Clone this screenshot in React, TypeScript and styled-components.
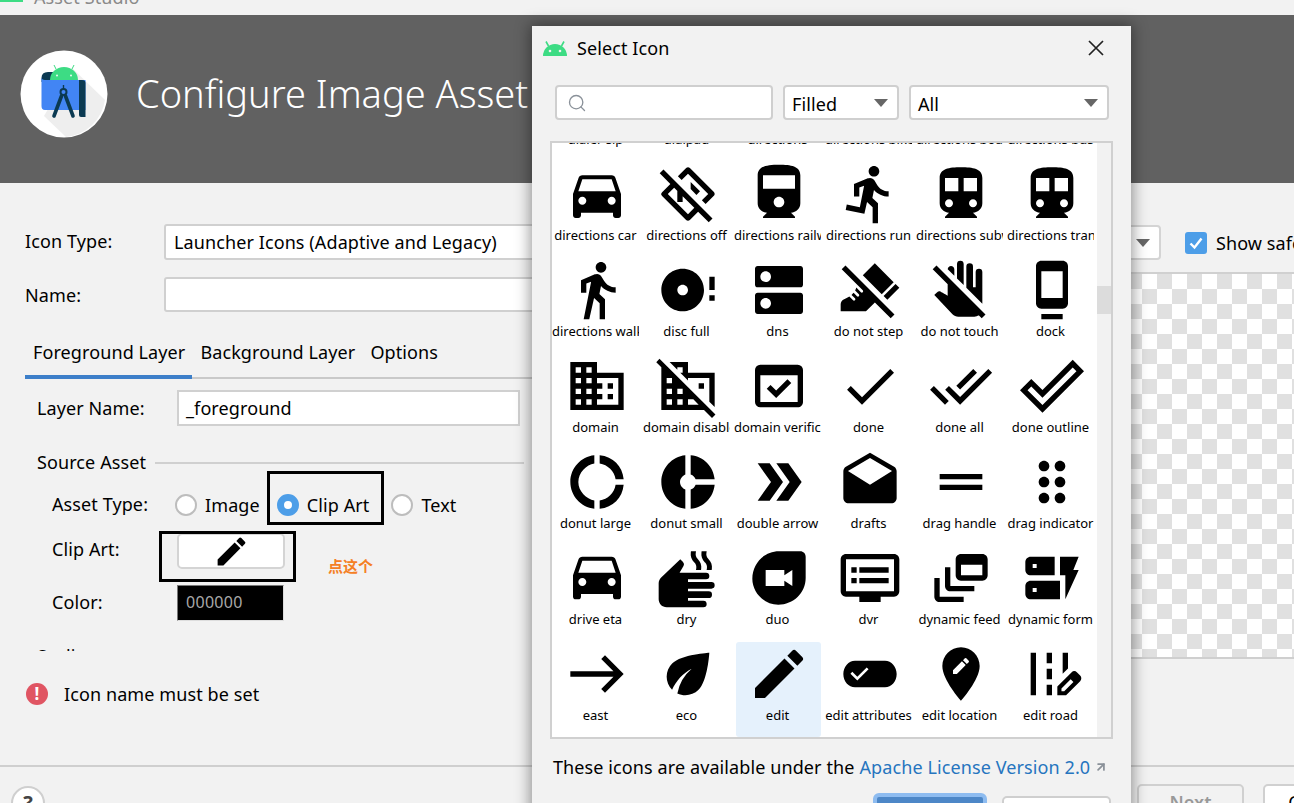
import React from 'react';
import styled, { createGlobalStyle } from 'styled-components';
import {
  MdDirectionsCar, MdOutlineDirectionsOff, MdDirectionsRailway, MdDirectionsRun, MdDirectionsSubway, MdDirectionsTransit,
  MdDirectionsWalk, MdDiscFull, MdDns, MdDoNotStep, MdDoNotTouch, MdDock,
  MdDomain, MdDomainDisabled, MdDomainVerification, MdDone, MdDoneAll, MdDoneOutline,
  MdDonutLarge, MdDonutSmall, MdDoubleArrow, MdDrafts, MdDragHandle, MdDragIndicator,
  MdDriveEta, MdDry, MdDuo, MdDvr, MdDynamicFeed, MdDynamicForm,
  MdEast, MdEco, MdEdit, MdEditAttributes, MdEditLocation, MdEditRoad,
  MdDialerSip, MdDialpad, MdDirections, MdDirectionsBike, MdDirectionsBoat, MdDirectionsBus,
} from 'react-icons/md';
import { Search, ArrowUpRight } from 'lucide-react';

const FONT = `"Noto Sans", "Noto Sans CJK SC", sans-serif`;

const Global = createGlobalStyle`
  html, body { margin: 0; padding: 0; background: #f2f2f2; }
  * { box-sizing: border-box; }
  body { font-family: ${FONT}; color: #000; }
`;

const Page = styled.div`
  position: relative;
  width: 1294px;
  height: 803px;
  overflow: hidden;
  display: flex;
  flex-direction: column;
  background: #f2f2f2;
  font-size: 18px;
  letter-spacing: 0.1px;
`;

const TopStrip = styled.div`
  height: 15px;
  flex: none;
  overflow: hidden;
  display: flex;
  align-items: flex-start;
`;
const AppMark = styled.div`
  width: 23px;
  height: 2px;
  background: #3ddc84;
`;
const AppName = styled.div`
  margin: -14px 0 0 11px;
  font-size: 18px;
  line-height: 22px;
  color: #8a8a8a;
`;

const Banner = styled.header`
  height: 168px;
  flex: none;
  background: #616161;
  display: flex;
  align-items: flex-start;
  padding: 35px 0 0 20px;
`;
const BannerLogo = styled.svg`
  width: 88px;
  height: 88px;
  flex: none;
`;
const BannerTitle = styled.h1`
  margin: 18px 0 0 28px;
  font-size: 38px;
  line-height: 50px;
  font-weight: 300;
  color: #fff;
  white-space: nowrap;
  letter-spacing: 0;
`;

const Body = styled.main`
  height: 582px;
  flex: none;
  display: flex;
`;
const LeftColumn = styled.section`
  width: 540px;
  flex: none;
  overflow: hidden;
  padding: 41px 0 0 25px;
`;
const FieldRow = styled.div<{ $top?: number; $height?: number }>`
  display: flex;
  align-items: center;
  height: ${p => p.$height ?? 36}px;
  margin-top: ${p => p.$top ?? 0}px;
`;
const FieldLabel = styled.label<{ $width: number; $lift?: number }>`
  width: ${p => p.$width}px;
  flex: none;
  white-space: nowrap;
  padding-bottom: ${p => p.$lift ?? 0}px;
`;
const TextBox = styled.div`
  flex: 1;
  align-self: stretch;
  background: #fff;
  border: 2px solid #d0d0d0;
  border-radius: 3px;
  padding-left: 8px;
  line-height: 33px;
  white-space: nowrap;
  overflow: hidden;
`;
const TabBar = styled.nav`
  display: flex;
  height: 44px;
  margin-top: 23px;
  border-bottom: 2px solid #c9c9c9;
`;
const Tab = styled.div<{ $active?: boolean }>`
  height: 44px;
  padding: 0 7px 0 8px;
  line-height: 34px;
  white-space: nowrap;
  border-bottom: 4px solid ${p => (p.$active ? '#3d7fc9' : 'transparent')};
`;
const FormScroller = styled.div`
  height: 272px;
  overflow: hidden;
  padding-left: 12px;
`;
const LayerBox = styled(TextBox)`
  flex: none;
  width: 343px;
  border-radius: 0;
  padding-left: 7px;
`;
const SectionHead = styled.div`
  display: flex;
  align-items: center;
  gap: 9px;
  width: 487px;
  height: 24px;
  margin-top: 24px;
  line-height: 22px;
  &::after {
    content: '';
    flex: 1;
    height: 2px;
    background: #d0d0d0;
    margin-top: 2px;
  }
`;
const SubRow = styled(FieldRow)`
  padding-left: 15px;
`;
const RadioGroup = styled.div`
  display: flex;
  align-items: center;
  margin-left: -2px;
`;
const RadioDot = styled.span<{ $on?: boolean }>`
  width: 22px;
  height: 22px;
  flex: none;
  border-radius: 50%;
  border: ${p => (p.$on ? '7px solid #4d9ee8' : '2px solid #bdbdbd')};
  background: #fff;
`;
const RadioText = styled.span<{ $gap: number }>`
  margin: 0 ${p => p.$gap}px 0 8px;
  padding-bottom: 1px;
  white-space: nowrap;
`;
const IconButton = styled.div`
  width: 108px;
  height: 36px;
  background: #fff;
  border: 2px solid #d4d4d4;
  border-radius: 5px;
  display: flex;
  align-items: center;
  justify-content: center;
`;
const ColorSwatch = styled.div`
  width: 107px;
  height: 36px;
  background: #000;
  color: #a8a8a8;
  border: 1px solid #777;
  border-right-color: #ddd;
  border-bottom-color: #ddd;
  font-size: 16px;
  line-height: 33px;
  padding-left: 8px;
  letter-spacing: 0.3px;
`;
const ClippedHead = styled.div`
  margin-top: 23px;
  line-height: 24px;
`;
const ErrorRow = styled.div`
  display: flex;
  align-items: center;
  gap: 16px;
  height: 22px;
  margin: 32px 0 0 1px;
  white-space: nowrap;
`;
const ErrorDot = styled.span`
  width: 22px;
  height: 22px;
  border-radius: 50%;
  background: #e05563;
  color: #fff;
  font-weight: 700;
  font-size: 17px;
  line-height: 22px;
  text-align: center;
`;

const RightColumn = styled.section`
  flex: 1;
  min-width: 0;
  overflow: hidden;
  padding-top: 42px;
`;
const PreviewBar = styled.div`
  display: flex;
  align-items: center;
  height: 35px;
  white-space: nowrap;
`;
const PreviewSelect = styled.div`
  width: 621px;
  height: 35px;
  flex: none;
  background: #fff;
  border: 2px solid #d4d4d4;
  border-radius: 4px;
  display: flex;
  align-items: center;
  justify-content: flex-end;
  padding-right: 9px;
`;
const Check = styled.span`
  width: 22px;
  height: 22px;
  flex: none;
  margin: 0 9px 0 24px;
  border-radius: 3px;
  background: #4d9ee8;
  display: flex;
  align-items: center;
  justify-content: center;
`;
const Checker = styled.div`
  height: 387px;
  margin-top: 12px;
  border-top: 2px solid #d0d0d0;
  border-bottom: 2px solid #cfcfcf;
  background: repeating-conic-gradient(#e0e0e0 0 25%, #fff 0 50%) 2px 0 / 30px 30px;
`;

const Footer = styled.footer`
  height: 38px;
  flex: none;
  overflow: hidden;
  display: flex;
  align-items: flex-start;
  justify-content: space-between;
  border-top: 2px solid #cfcfcf;
`;
const HelpCircle = styled.div`
  width: 34px;
  height: 34px;
  margin: 19px 0 0 11px;
  border: 2px solid #cfcfcf;
  border-radius: 50%;
  background: #fff;
  text-align: center;
  font-size: 20px;
  font-weight: 700;
  line-height: 30px;
  color: #444;
`;
const WizardButtons = styled.div`
  display: flex;
  gap: 19px;
  margin-right: -76px;
  margin-top: 17px;
`;
const WizardButton = styled.div<{ $disabled?: boolean }>`
  width: 107px;
  height: 38px;
  border: 2px solid #d0d0d0;
  border-radius: 5px;
  background: ${p => (p.$disabled ? '#f2f2f2' : '#fff')};
  color: ${p => (p.$disabled ? '#999' : '#000')};
  text-align: center;
  line-height: 32px;
  font-weight: ${p => (p.$disabled ? 600 : 400)};
`;

const Callout = styled.div<{ $x: number; $y: number; $w: number; $h: number }>`
  position: absolute;
  left: ${p => p.$x}px;
  top: ${p => p.$y}px;
  width: ${p => p.$w}px;
  height: ${p => p.$h}px;
  border: 3px solid #000;
`;
const Hint = styled.div`
  position: absolute;
  left: 328px;
  top: 555px;
  font-size: 15px;
  line-height: 22px;
  font-weight: 700;
  color: #f58025;
  letter-spacing: 0;
`;

const Dialog = styled.aside`
  position: absolute;
  left: 532px;
  top: 26px;
  width: 599px;
  height: 800px;
  background: #f2f2f2;
  box-shadow: 0 0 14px 2px rgba(0, 0, 0, 0.4);
  display: flex;
  flex-direction: column;
`;
const DialogHead = styled.div`
  display: flex;
  align-items: center;
  height: 44px;
  flex: none;
  padding: 0 27px 0 11px;
`;
const DialogMark = styled.svg`
  width: 24px;
  height: 18px;
  flex: none;
`;
const DialogTitle = styled.div`
  flex: 1;
  margin-left: 10px;
`;
const FilterRow = styled.div`
  display: flex;
  gap: 10px;
  height: 35px;
  flex: none;
  margin: 15px 0 0 23px;
`;
const SearchBox = styled.div`
  width: 218px;
  background: #fff;
  border: 2px solid #cfcfcf;
  border-radius: 4px;
  display: flex;
  align-items: center;
  padding-left: 10px;
`;
const Select = styled.div<{ $w: number }>`
  width: ${p => p.$w}px;
  background: #fff;
  border: 2px solid #cfcfcf;
  border-radius: 4px;
  display: flex;
  align-items: center;
  justify-content: space-between;
  padding: 0 9px 0 7px;
`;
const SelectText = styled.span`
  padding-top: 2px;
`;
const Caret = styled.span`
  width: 0;
  height: 0;
  border-left: 7px solid transparent;
  border-right: 7px solid transparent;
  border-top: 8px solid #666;
`;
const IconList = styled.div`
  width: 563px;
  height: 598px;
  flex: none;
  margin: 21px 0 0 18px;
  border: 2px solid #d0d0d0;
  background: #fff;
  display: flex;
  overflow: hidden;
`;
const IconGrid = styled.div`
  width: 545px;
  flex: none;
  align-self: flex-start;
  margin-top: -77px;
  padding-left: 2px;
  display: grid;
  grid-template-columns: repeat(6, 85px);
  grid-auto-rows: 95px;
  column-gap: 6px;
  row-gap: 1px;
`;
const Tile = styled.div<{ $selected?: boolean }>`
  background: ${p => (p.$selected ? '#e5f1fc' : 'transparent')};
  border-radius: 3px;
  display: flex;
  flex-direction: column;
  align-items: center;
  font-size: 13px;
  letter-spacing: 0;
`;
const TileLabel = styled.div`
  width: 87px;
  align-self: flex-start;
  margin-left: -2px;
  height: 18px;
  line-height: 18px;
  text-align: center;
  white-space: nowrap;
  overflow: hidden;
`;
const ScrollTrack = styled.div`
  flex: 1;
  background: #f2f2f2;
`;
const ScrollThumb = styled.div`
  height: 28px;
  margin-top: 143px;
  background: #dcdcdc;
`;
const License = styled.div`
  display: flex;
  align-items: center;
  height: 24px;
  flex: none;
  margin: 16px 0 0 21px;
  white-space: nowrap;
`;
const LicenseLink = styled.span`
  color: #2675bf;
  margin-left: 5px;
`;
const LicenseArrow = styled(ArrowUpRight)`
  margin-left: 4px;
`;
const DialogButtons = styled.div`
  display: flex;
  justify-content: flex-end;
  gap: 15px;
  flex: none;
  margin-top: 14px;
  padding-right: 20px;
`;
const OkButton = styled.div`
  width: 114px;
  height: 40px;
  border: 4px solid #8ebcf0;
  border-radius: 6px;
  background: #4d87c7;
`;
const CancelButton = styled.div`
  width: 109px;
  height: 38px;
  border: 2px solid #cfcfcf;
  border-radius: 5px;
  background: #fff;
  margin-top: 3px;
`;

const rows: [React.ComponentType<{ size?: number }>, string][][] = [
  [[MdDialerSip, 'dialer sip'], [MdDialpad, 'dialpad'], [MdDirections, 'directions'], [MdDirectionsBike, 'directions bike'], [MdDirectionsBoat, 'directions boat'], [MdDirectionsBus, 'directions bus']],
  [[MdDirectionsCar, 'directions car'], [MdOutlineDirectionsOff, 'directions off'], [MdDirectionsRailway, 'directions railway'], [MdDirectionsRun, 'directions run'], [MdDirectionsSubway, 'directions subway'], [MdDirectionsTransit, 'directions transit']],
  [[MdDirectionsWalk, 'directions walk'], [MdDiscFull, 'disc full'], [MdDns, 'dns'], [MdDoNotStep, 'do not step'], [MdDoNotTouch, 'do not touch'], [MdDock, 'dock']],
  [[MdDomain, 'domain'], [MdDomainDisabled, 'domain disabled'], [MdDomainVerification, 'domain verification'], [MdDone, 'done'], [MdDoneAll, 'done all'], [MdDoneOutline, 'done outline']],
  [[MdDonutLarge, 'donut large'], [MdDonutSmall, 'donut small'], [MdDoubleArrow, 'double arrow'], [MdDrafts, 'drafts'], [MdDragHandle, 'drag handle'], [MdDragIndicator, 'drag indicator']],
  [[MdDriveEta, 'drive eta'], [MdDry, 'dry'], [MdDuo, 'duo'], [MdDvr, 'dvr'], [MdDynamicFeed, 'dynamic feed'], [MdDynamicForm, 'dynamic form']],
  [[MdEast, 'east'], [MdEco, 'eco'], [MdEdit, 'edit'], [MdEditAttributes, 'edit attributes'], [MdEditLocation, 'edit location'], [MdEditRoad, 'edit road']],
];

export default function App() {
  return (
    <>
      <Global />
      <Page>
        <TopStrip>
          <AppMark />
          <AppName>Asset Studio</AppName>
        </TopStrip>
        <Banner>
          <BannerLogo viewBox="0 0 88 88">
            <circle cx="44" cy="44" r="43.5" fill="#fff" />
            <path d="M52 18 L85 50 A43.5 43.5 0 0 1 46 87 L24 66 Z" fill="#eeeeee" />
            <path d="M21.5 28 Q21.5 22 28 22 L36 22 L36 32 L21.5 32 Z" fill="#0b3a52" />
            <path d="M30 30 A14 13 0 0 1 58 30 Z" fill="#3ddc84" />
            <path d="M36 19 L34 15 M52 19 L54 15" stroke="#3ddc84" strokeWidth="1" />
            <circle cx="37" cy="25.5" r="0.9" fill="#fff" />
            <circle cx="51" cy="25.5" r="0.9" fill="#fff" />
            <path d="M21.5 27 Q21.5 30 25 30 L65.5 30 L65.5 60 L25 60 Q21.5 60 21.5 56 Z" fill="#4285f4" />
            <path d="M59 30 L62 30 Q65.5 30 65.5 33 L65.5 67 L61 67 Q59 67 59 65 Z" fill="#0b3a52" />
            <path d="M43.5 35 L43.5 39" stroke="#0b3a52" strokeWidth="1.4" />
            <circle cx="43.5" cy="42" r="3" fill="none" stroke="#0b3a52" strokeWidth="2" />
            <path d="M41.5 46 L34 66 M45.5 46 L53 66" stroke="#0b3a52" strokeWidth="3.6" strokeLinecap="round" />
          </BannerLogo>
          <BannerTitle>Configure Image Asset</BannerTitle>
        </Banner>

        <Body>
          <LeftColumn>
            <FieldRow>
              <FieldLabel $width={139} $lift={2}>Icon Type:</FieldLabel>
              <TextBox>Launcher Icons (Adaptive and Legacy)</TextBox>
            </FieldRow>
            <FieldRow $top={17} $height={35}>
              <FieldLabel $width={139}>Name:</FieldLabel>
              <TextBox />
            </FieldRow>
            <TabBar>
              <Tab $active>Foreground Layer</Tab>
              <Tab>Background Layer</Tab>
              <Tab>Options</Tab>
            </TabBar>
            <FormScroller>
              <FieldRow $top={11}>
                <FieldLabel $width={140}>Layer Name:</FieldLabel>
                <LayerBox>_foreground</LayerBox>
              </FieldRow>
              <SectionHead>Source Asset</SectionHead>
              <SubRow $top={13}>
                <FieldLabel $width={125} $lift={2}>Asset Type:</FieldLabel>
                <RadioGroup>
                  <RadioDot />
                  <RadioText $gap={17}>Image</RadioText>
                  <RadioDot $on />
                  <RadioText $gap={22}>Clip Art</RadioText>
                  <RadioDot />
                  <RadioText $gap={0}>Text</RadioText>
                </RadioGroup>
              </SubRow>
              <SubRow $top={10}>
                <FieldLabel $width={125} $lift={4}>Clip Art:</FieldLabel>
                <IconButton><MdEdit size={37} /></IconButton>
              </SubRow>
              <SubRow $top={16}>
                <FieldLabel $width={125} $lift={2}>Color:</FieldLabel>
                <ColorSwatch>000000</ColorSwatch>
              </SubRow>
              <ClippedHead>Scaling</ClippedHead>
            </FormScroller>
            <ErrorRow>
              <ErrorDot>!</ErrorDot>
              Icon name must be set
            </ErrorRow>
          </LeftColumn>

          <RightColumn>
            <PreviewBar>
              <PreviewSelect><Caret /></PreviewSelect>
              <Check>
                <svg width="16" height="16" viewBox="0 0 16 16">
                  <path d="M2.5 8.5 L6.5 12.5 L13.5 3.5" fill="none" stroke="#fff" strokeWidth="2.4" />
                </svg>
              </Check>
              Show safe zone
            </PreviewBar>
            <Checker />
          </RightColumn>
        </Body>

        <Footer>
          <HelpCircle>?</HelpCircle>
          <WizardButtons>
            <WizardButton $disabled>Next</WizardButton>
            <WizardButton>Cancel</WizardButton>
          </WizardButtons>
        </Footer>

        <Callout $x={267} $y={471} $w={117} $h={54} />
        <Callout $x={159} $y={531} $w={137} $h={51} />
        <Hint>点这个</Hint>

        <Dialog>
          <DialogHead>
            <DialogMark viewBox="0 0 24 18">
              <path d="M0 17 A12 12 0 0 1 24 17 Z" fill="#3ddc84" />
              <path d="M5.5 7 L3 2.5 M18.5 7 L21 2.5" stroke="#3ddc84" strokeWidth="1.6" />
              <circle cx="7" cy="12" r="1.3" fill="#f2f2f2" />
              <circle cx="17" cy="12" r="1.3" fill="#f2f2f2" />
            </DialogMark>
            <DialogTitle>Select Icon</DialogTitle>
            <svg width="16" height="16" viewBox="0 0 16 16">
              <path d="M1 1 L15 15 M15 1 L1 15" stroke="#222" strokeWidth="1.7" />
            </svg>
          </DialogHead>
          <FilterRow>
            <SearchBox><Search size={20} color="#8a9199" strokeWidth={1.6} /></SearchBox>
            <Select $w={116}><SelectText>Filled</SelectText><Caret /></Select>
            <Select $w={200}><SelectText>All</SelectText><Caret /></Select>
          </FilterRow>
          <IconList>
            <IconGrid>
              {rows.flat().map(([Icon, name]) => (
                <Tile key={name} $selected={name === 'edit'}>
                  <Icon size={64} />
                  <TileLabel>{name}</TileLabel>
                </Tile>
              ))}
            </IconGrid>
            <ScrollTrack><ScrollThumb /></ScrollTrack>
          </IconList>
          <License>
            These icons are available under the
            <LicenseLink>Apache License Version 2.0</LicenseLink>
            <LicenseArrow size={14} color="#8a9199" strokeWidth={3} />
          </License>
          <DialogButtons>
            <OkButton />
            <CancelButton />
          </DialogButtons>
        </Dialog>
      </Page>
    </>
  );
}
